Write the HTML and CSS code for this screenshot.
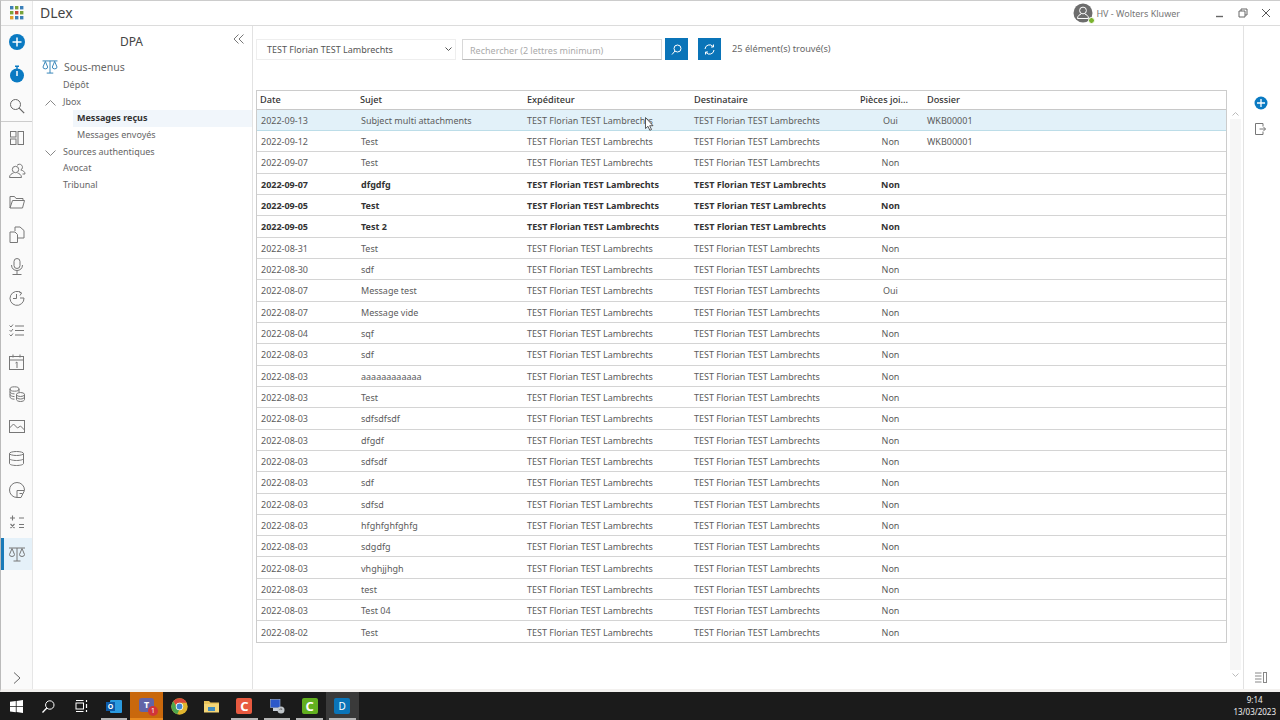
FILE: index.html
```html
<!DOCTYPE html>
<html lang="fr">
<head>
<meta charset="utf-8">
<title>DLex</title>
<link rel="stylesheet" href="styles.css">
</head>
<body>
<div class="window">
  <header class="topbar">
    <div class="brand-cell">
      <svg width="14" height="14" viewBox="0 0 14 14"><rect x="0" y="0" width="3.4" height="3.4" fill="#3b7fb8"/><rect x="5" y="0" width="3.4" height="3.4" fill="#7aa33a"/><rect x="10" y="0" width="3.4" height="3.4" fill="#3b7fb8"/><rect x="0" y="5" width="3.4" height="3.4" fill="#7aa33a"/><rect x="5" y="5" width="3.4" height="3.4" fill="#c8453b"/><rect x="10" y="5" width="3.4" height="3.4" fill="#7aa33a"/><rect x="0" y="10" width="3.4" height="3.4" fill="#e0a030"/><rect x="5" y="10" width="3.4" height="3.4" fill="#3b7fb8"/><rect x="10" y="10" width="3.4" height="3.4" fill="#3b7fb8"/></svg>
    </div>
    <div class="app-name">DLex</div>
    <div class="user">
      <span class="avatar">
        <svg width="20" height="20" viewBox="0 0 20 20"><circle cx="10" cy="10" r="9.5" fill="#6d6d6d"/><circle cx="10" cy="7.500" r="3.400" fill="none" stroke="#fff" stroke-width="1"/><path d="M4.500 15.500c0-3 2.400-4 3.600-4.400M15.500 15.500c0-3-2.400-4-3.600-4.400M4.500 15.500h11" fill="none" stroke="#fff" stroke-width="1"/></svg>
        <span class="status"></span>
      </span>
      <span class="user-name">HV - Wolters Kluwer</span>
    </div>
    <div class="win-controls">
      <svg width="10" height="10" viewBox="0 0 10 10"><path d="M1 8.500h7" stroke="#666" stroke-width="1.400"/></svg>
      <svg width="10" height="10" viewBox="0 0 10 10"><path d="M1 3h6v6H1zM3 3V1h6v6H7" fill="none" stroke="#666"/></svg>
      <svg width="10" height="10" viewBox="0 0 10 10"><path d="M1 1l8 8M9 1l-8 8" stroke="#555"/></svg>
    </div>
  </header>
  <div class="body">
    <nav class="rail">
      <div class="rail-item"><svg width="16" height="16" viewBox="0 0 16 16"><circle cx="8" cy="8" r="8" fill="#0a7ac2"/><path d="M8 3.500v9M3.500 8h9" stroke="#fff" stroke-width="1.500"/></svg></div>
      <div class="rail-item"><svg width="16" height="18" viewBox="0 0 16 18"><circle cx="8" cy="10.500" r="7" fill="#0a7ac2"/><rect x="6" y="0.500" width="4" height="1.500" fill="#0a7ac2"/><rect x="7.300" y="2" width="1.400" height="2" fill="#0a7ac2"/><path d="M8 6v5" stroke="#fff" stroke-width="1.500"/></svg></div>
      <div class="rail-item rail-search"><svg width="16" height="16" viewBox="0 0 16 16"><circle cx="6.500" cy="6.500" r="5" fill="none" stroke="#666"/><path d="M10.200 10.200l5 5" stroke="#666" stroke-width="1.200"/></svg></div>
      <div class="rail-item"><svg width="16" height="16" viewBox="0 0 16 16" fill="none" stroke="#777"><rect x="1.500" y="1.500" width="5.500" height="5.500"/><rect x="1.500" y="9" width="5.500" height="5.500"/><rect x="9" y="1.500" width="5.500" height="13"/></svg></div>
      <div class="rail-item"><svg width="18" height="18" viewBox="0 0 18 18" fill="none" stroke="#777"><circle cx="7.500" cy="8.500" r="3.200"/><path d="M1.500 16.500c0-3 2.500-4 4-4.500M13.500 16.500c0-3-2.500-4-4-4.500M1.500 16.500h12"/><path d="M9 4.500a3 3 0 1 1 3.800 4.400c2 .6 4.200 1.600 4.200 4.100h-2.500"/></svg></div>
      <div class="rail-item"><svg width="16" height="14" viewBox="0 0 16 14" fill="none" stroke="#777"><path d="M1 13V1.500h4.500l1.500 2h7v2"/><path d="M1 13l2.500-7.500H15.500L13.500 13z"/></svg></div>
      <div class="rail-item"><svg width="16" height="17" viewBox="0 0 16 17" fill="none" stroke="#777"><path d="M1 6h5l2.500 2.500V16.500H1z"/><path d="M6 5V1h5l4 3.500V12H9"/></svg></div>
      <div class="rail-item"><svg width="14" height="17" viewBox="0 0 14 17" fill="none" stroke="#777"><rect x="4" y="0.500" width="6" height="10" rx="3"/><path d="M1.500 7c0 3.500 2.500 5.500 5.500 5.500s5.500-2 5.500-5.500M7 12.500v3.500M2.500 16.500h9"/></svg></div>
      <div class="rail-item"><svg width="16" height="16" viewBox="0 0 16 16" fill="none" stroke="#777"><path d="M12.500 3A7 7 0 1 0 15 8"/><path d="M7.500 4v4.500H4M10 1.500l2.500 1.500L11 5.500M11 8h4"/></svg></div>
      <div class="rail-item"><svg width="15" height="13" viewBox="0 0 15 13" fill="none" stroke="#777"><path d="M0.500 1.500l1.500 1.500 2-2.500M0.500 6l1.500 1.500 2-2.500M0.500 10.500l1.500 1.500 2-2.500M6 2h9M6 6.500h9M6 11h9"/></svg></div>
      <div class="rail-item"><svg width="15" height="16" viewBox="0 0 15 16" fill="none" stroke="#777"><rect x="0.500" y="2.500" width="14" height="13"/><path d="M0.500 6h14M4 0.500v3M11 0.500v3M6.500 9l1.500-1v6"/></svg></div>
      <div class="rail-item"><svg width="16" height="16" viewBox="0 0 16 16" fill="none" stroke="#777"><ellipse cx="5.500" cy="3" rx="4.500" ry="2.200"/><path d="M1 3v8c0 1.200 2 2.200 4.500 2.200M10 3v3M1 5.700c0 1.200 2 2.200 4.500 2.200M1 8.400c0 1.200 2 2.200 4.500 2.200"/><ellipse cx="11.500" cy="8.500" rx="4" ry="2"/><path d="M7.500 8.500v5c0 1.100 1.800 2 4 2s4-.9 4-2v-5M7.500 11c0 1.100 1.800 2 4 2s4-.9 4-2"/></svg></div>
      <div class="rail-item"><svg width="16" height="13" viewBox="0 0 16 13" fill="none" stroke="#777"><rect x="0.500" y="0.500" width="15" height="12"/><path d="M0.500 8l4-4 4 4 3-2 4 4"/></svg></div>
      <div class="rail-item"><svg width="15" height="15" viewBox="0 0 15 15" fill="none" stroke="#777"><ellipse cx="7.500" cy="2.500" rx="7" ry="2"/><path d="M0.500 2.500v10c0 1.100 3.100 2 7 2s7-.9 7-2v-10M0.500 7.500c0 1.100 3.100 2 7 2s7-.9 7-2"/></svg></div>
      <div class="rail-item"><svg width="16" height="16" viewBox="0 0 16 16" fill="none" stroke="#777"><path d="M15.500 8A7.500 7.500 0 1 0 8 15.500"/><path d="M8 15.500V8.500h7.500L12 15.500z"/><path d="M10.500 11.500h3"/></svg></div>
      <div class="rail-item"><svg width="16" height="14" viewBox="0 0 16 14" stroke="#777" stroke-width="1.100"><path d="M3.500 0.500v5M1 3h5M10 3h5M1.500 9l4 4M5.500 9l-4 4M10 9.500h5M10 12.500h5"/></svg></div>
      <div class="rail-item is-active"><svg class="scale-icon" width="16" height="15" viewBox="0 0 16 15" fill="none" stroke="#777"><path d="M0 1h16M8 1v13M4.500 14h7M3 1.500L0.500 7.500a2.500 2 0 0 0 5 0zM13 1.500l-2.500 6a2.500 2 0 0 0 5 0z"/></svg></div>
      <div class="rail-spacer"></div>
      <div class="rail-expand"><svg width="8" height="12" viewBox="0 0 8 12"><path d="M1 0.500l6 5.500-6 5.500" fill="none" stroke="#666"/></svg></div>
    </nav>
    <aside class="sidebar">
      <div class="side-title">
        <span>DPA</span>
        <svg class="collapse" width="11" height="10" viewBox="0 0 11 10"><path d="M5.500 0.500L1 5l4.500 4.500M10.500 0.500L6 5l4.500 4.500" fill="none" stroke="#777"/></svg>
      </div>
      <div class="side-head">
        <svg width="16" height="14" viewBox="0 0 16 15" fill="none" stroke="#2b7fb5"><path d="M0 1h16M8 1v13M4.500 14h7M3 1.500L0.500 7.500a2.500 2 0 0 0 5 0zM13 1.500l-2.500 6a2.500 2 0 0 0 5 0z"/></svg>
        <span>Sous-menus</span>
      </div>
      <ul class="side-menu">
        <li class="lvl1">Dépôt</li>
        <li class="lvl1"><svg class="caret" width="11" height="6" viewBox="0 0 11 6"><path d="M0.500 5.500L5.500 0.500l5 5" fill="none" stroke="#888"/></svg>Jbox</li>
        <li class="lvl2 selected">Messages reçus</li>
        <li class="lvl2">Messages envoyés</li>
        <li class="lvl1"><svg class="caret" width="11" height="6" viewBox="0 0 11 6"><path d="M0.500 0.500l5 5 5-5" fill="none" stroke="#888"/></svg>Sources authentiques</li>
        <li class="lvl1">Avocat</li>
        <li class="lvl1">Tribunal</li>
      </ul>
    </aside>
    <main class="main">
      <div class="toolbar">
        <div class="select"><span>TEST Florian TEST Lambrechts</span><svg width="7" height="5" viewBox="0 0 7 5"><path d="M0.500 0.500l3 3 3-3" fill="none" stroke="#555"/></svg></div>
        <div class="search">Rechercher (2 lettres minimum)</div>
        <div class="btn"><svg width="11" height="11" viewBox="0 0 11 11" fill="none" stroke="#fff"><circle cx="6.500" cy="4.500" r="3.500"/><path d="M4 7l-3 3.500"/></svg></div>
        <div class="btn btn-refresh"><svg width="11" height="11" viewBox="0 0 11 11" fill="none" stroke="#fff"><path d="M1 5a4.500 4.500 0 0 1 8-2.500M10 6a4.500 4.500 0 0 1-8 2.500M9.500 0.500v2.500H7M1.500 10.500V8H4"/></svg></div>
        <div class="count">25 élément(s) trouvé(s)</div>
      </div>
      <div class="table-wrap">
        <div class="table">
          <div class="row head"><span>Date</span><span>Sujet</span><span>Expéditeur</span><span>Destinataire</span><span>Pièces joi...</span><span>Dossier</span></div>
          <div class="row hover"><span>2022-09-13</span><span>Subject multi attachments</span><span>TEST Florian TEST Lambrechts</span><span>TEST Florian TEST Lambrechts</span><span class="c">Oui</span><span>WKB00001</span></div>
          <div class="row"><span>2022-09-12</span><span>Test</span><span>TEST Florian TEST Lambrechts</span><span>TEST Florian TEST Lambrechts</span><span class="c">Non</span><span>WKB00001</span></div>
          <div class="row"><span>2022-09-07</span><span>Test</span><span>TEST Florian TEST Lambrechts</span><span>TEST Florian TEST Lambrechts</span><span class="c">Non</span><span></span></div>
          <div class="row unread"><span>2022-09-07</span><span>dfgdfg</span><span>TEST Florian TEST Lambrechts</span><span>TEST Florian TEST Lambrechts</span><span class="c">Non</span><span></span></div>
          <div class="row unread"><span>2022-09-05</span><span>Test</span><span>TEST Florian TEST Lambrechts</span><span>TEST Florian TEST Lambrechts</span><span class="c">Non</span><span></span></div>
          <div class="row unread"><span>2022-09-05</span><span>Test 2</span><span>TEST Florian TEST Lambrechts</span><span>TEST Florian TEST Lambrechts</span><span class="c">Non</span><span></span></div>
          <div class="row"><span>2022-08-31</span><span>Test</span><span>TEST Florian TEST Lambrechts</span><span>TEST Florian TEST Lambrechts</span><span class="c">Non</span><span></span></div>
          <div class="row"><span>2022-08-30</span><span>sdf</span><span>TEST Florian TEST Lambrechts</span><span>TEST Florian TEST Lambrechts</span><span class="c">Non</span><span></span></div>
          <div class="row"><span>2022-08-07</span><span>Message test</span><span>TEST Florian TEST Lambrechts</span><span>TEST Florian TEST Lambrechts</span><span class="c">Oui</span><span></span></div>
          <div class="row"><span>2022-08-07</span><span>Message vide</span><span>TEST Florian TEST Lambrechts</span><span>TEST Florian TEST Lambrechts</span><span class="c">Non</span><span></span></div>
          <div class="row"><span>2022-08-04</span><span>sqf</span><span>TEST Florian TEST Lambrechts</span><span>TEST Florian TEST Lambrechts</span><span class="c">Non</span><span></span></div>
          <div class="row"><span>2022-08-03</span><span>sdf</span><span>TEST Florian TEST Lambrechts</span><span>TEST Florian TEST Lambrechts</span><span class="c">Non</span><span></span></div>
          <div class="row"><span>2022-08-03</span><span>aaaaaaaaaaaa</span><span>TEST Florian TEST Lambrechts</span><span>TEST Florian TEST Lambrechts</span><span class="c">Non</span><span></span></div>
          <div class="row"><span>2022-08-03</span><span>Test</span><span>TEST Florian TEST Lambrechts</span><span>TEST Florian TEST Lambrechts</span><span class="c">Non</span><span></span></div>
          <div class="row"><span>2022-08-03</span><span>sdfsdfsdf</span><span>TEST Florian TEST Lambrechts</span><span>TEST Florian TEST Lambrechts</span><span class="c">Non</span><span></span></div>
          <div class="row"><span>2022-08-03</span><span>dfgdf</span><span>TEST Florian TEST Lambrechts</span><span>TEST Florian TEST Lambrechts</span><span class="c">Non</span><span></span></div>
          <div class="row"><span>2022-08-03</span><span>sdfsdf</span><span>TEST Florian TEST Lambrechts</span><span>TEST Florian TEST Lambrechts</span><span class="c">Non</span><span></span></div>
          <div class="row"><span>2022-08-03</span><span>sdf</span><span>TEST Florian TEST Lambrechts</span><span>TEST Florian TEST Lambrechts</span><span class="c">Non</span><span></span></div>
          <div class="row"><span>2022-08-03</span><span>sdfsd</span><span>TEST Florian TEST Lambrechts</span><span>TEST Florian TEST Lambrechts</span><span class="c">Non</span><span></span></div>
          <div class="row"><span>2022-08-03</span><span>hfghfghfghfg</span><span>TEST Florian TEST Lambrechts</span><span>TEST Florian TEST Lambrechts</span><span class="c">Non</span><span></span></div>
          <div class="row"><span>2022-08-03</span><span>sdgdfg</span><span>TEST Florian TEST Lambrechts</span><span>TEST Florian TEST Lambrechts</span><span class="c">Non</span><span></span></div>
          <div class="row"><span>2022-08-03</span><span>vhghjjhgh</span><span>TEST Florian TEST Lambrechts</span><span>TEST Florian TEST Lambrechts</span><span class="c">Non</span><span></span></div>
          <div class="row"><span>2022-08-03</span><span>test</span><span>TEST Florian TEST Lambrechts</span><span>TEST Florian TEST Lambrechts</span><span class="c">Non</span><span></span></div>
          <div class="row"><span>2022-08-03</span><span>Test 04</span><span>TEST Florian TEST Lambrechts</span><span>TEST Florian TEST Lambrechts</span><span class="c">Non</span><span></span></div>
          <div class="row"><span>2022-08-02</span><span>Test</span><span>TEST Florian TEST Lambrechts</span><span>TEST Florian TEST Lambrechts</span><span class="c">Non</span><span></span></div>
          <svg class="cursor" width="9" height="14" viewBox="0 0 9 14"><path d="M0.500 0.500v11l2.500-2.200 1.800 4 1.700-.8-1.800-3.800h3.300z" fill="#fff" stroke="#333" stroke-width="0.800"/></svg>
        </div>
        <div class="scrollbar">
          <svg width="7" height="4" viewBox="0 0 7 4"><path d="M0.500 3.500l3-3 3 3" fill="none" stroke="#bbb"/></svg>
          <div class="track"></div>
          <svg width="7" height="4" viewBox="0 0 7 4"><path d="M0.500 0.500l3 3 3-3" fill="none" stroke="#bbb"/></svg>
        </div>
      </div>
    </main>
    <aside class="right-rail">
      <svg class="rr-add" width="14" height="14" viewBox="0 0 14 14"><circle cx="7" cy="7" r="6.500" fill="#0a7ac2"/><path d="M7 3v8M3 7h8" stroke="#fff" stroke-width="1.300"/></svg>
      <svg class="rr-exit" width="11" height="12" viewBox="0 0 11 12" fill="none" stroke="#777"><path d="M8 3.500V0.500H0.500v11H8V8.500M4.500 6h6M8.500 4l2 2-2 2"/></svg>
      <div class="rail-spacer"></div>
      <svg class="rr-list" width="12" height="11" viewBox="0 0 12 11" fill="none" stroke="#888"><path d="M0 1h6.500M0 4h6.500M0 7h6.500M0 10h6.500"/><rect x="8.500" y="0.500" width="3" height="10"/></svg>
    </aside>
  </div>
</div>
<footer class="taskbar">
  <div class="task"><svg width="13" height="13" viewBox="0 0 13 13" fill="#fff"><path d="M0 1.800L5.800 1v5.200H0zM6.600 .9L13 0v6.200H6.600zM0 7h5.800v5.200L0 11.400zM6.600 7H13v6l-6.400-.9z"/></svg></div>
  <div class="task"><svg width="13" height="13" viewBox="0 0 13 13" fill="none" stroke="#fff"><circle cx="7.800" cy="5" r="4.200"/><path d="M4.800 8l-4.300 4.500" stroke-width="1.300"/></svg></div>
  <div class="task"><svg width="13" height="12" viewBox="0 0 13 12" fill="none" stroke="#fff"><rect x="1" y="3" width="7.500" height="6"/><path d="M1 0.500h7.500M1 11.500h7.500M11.500 0v2M11.500 4v4M11.500 10v2" stroke-width="1.200"/></svg></div>
  <div class="task open"><span class="outlook-wrap"><span class="outlook-env"></span><span class="outlook-o">O</span></span></div>
  <div class="task teams"><span class="teams-ic">T</span><span class="badge">1</span></div>
  <div class="task"><svg width="17" height="17" viewBox="0 0 17 17"><circle cx="8.500" cy="8.500" r="8.200" fill="#e0b52e"/><path d="M8.500 .3a8.200 8.200 0 0 1 7.300 4.500H8.500a3.700 3.700 0 0 0-3.500 2.500L2.300 3.200A8.200 8.200 0 0 1 8.500 .3z" fill="#d9483b"/><path d="M2.300 3.200L5.800 9.800l3.400 0-3 6.500A8.200 8.200 0 0 1 2.300 3.200z" fill="#4da54e"/><circle cx="8.500" cy="8.500" r="3.700" fill="#fff"/><circle cx="8.500" cy="8.500" r="2.900" fill="#4285d0"/></svg></div>
  <div class="task"><svg width="15" height="13" viewBox="0 0 15 13"><path d="M0 1h5l1.500 1.500H15V12H0z" fill="#e9c35a"/><rect x="0" y="4" width="15" height="8.500" fill="#f3d577"/><rect x="4" y="7" width="7" height="4" fill="#3f8cc0"/></svg></div>
  <div class="task open"><span class="app camtasia-r">C</span></div>
  <div class="task open"><svg width="15" height="15" viewBox="0 0 15 15"><rect x="0.500" y="0.500" width="9.500" height="8" fill="#2c58c9" stroke="#9db4e0" stroke-width="0.600"/><rect x="3" y="9" width="8" height="3" fill="#c6cdd8"/><circle cx="11" cy="11" r="3.500" fill="#bfc4c8"/><path d="M9.500 11l1.500-1.500 1 1.500" stroke="#444" fill="none" stroke-width="0.700"/></svg></div>
  <div class="task open"><span class="app camtasia-g">C</span></div>
  <div class="task active-app open"><span class="app dlex">D</span></div>
  <div class="task-spacer"></div>
  <div class="clock"><span>9:14</span><span>13/03/2023</span></div>
</footer>
</body>
</html>
```
FILE: styles.css
```css
* { box-sizing: border-box; }
html, body { margin: 0; padding: 0; width: 1280px; height: 720px; overflow: hidden; }
body { font-family: "Noto Sans", "Open Sans", sans-serif; font-size: 9px; color: #5c5c5c; background: #fff; display: flex; flex-direction: column; }
svg { display: block; flex: none; }

.window { height: 692px; display: flex; flex-direction: column; border-left: 1px solid #bbb; border-top: 1px solid #ccc; border-bottom: 3px solid #f3f1ef; }
.topbar { height: 25px; display: flex; align-items: center; border-bottom: 1px solid #dcdcdc; flex: none; }
.brand-cell { width: 32px; height: 100%; display: flex; align-items: center; justify-content: center; background: #fafafa; border-right: 1px solid #e6e6e6; }
.app-name { margin-left: 7px; padding-bottom: 2px; font-size: 14px; color: #444; flex: 1; }
.user { display: flex; align-items: center; gap: 3px; margin-right: 35px; }
.avatar { position: relative; display: block; width: 20px; height: 20px; }
.status { position: absolute; right: -2px; bottom: -1px; width: 7px; height: 7px; border-radius: 50%; background: #7ab32e; border: 1px solid #fff; }
.user-name { font-size: 9px; color: #777; padding-top: 1px; }
.win-controls { display: flex; gap: 13px; margin-right: 9px; align-items: center; }

.body { flex: 1; display: flex; min-height: 0; }
.rail { width: 32px; background: #fafafa; border-right: 1px solid #e6e6e6; display: flex; flex-direction: column; flex: none; }
.rail-item { height: 32px; display: flex; align-items: center; justify-content: center; flex: none; }
.rail-search { border-bottom: 1px solid #ccc; }
.is-active { background: #e5f1f9; border-left: 3px solid #1a7ab8; padding-right: 3px; }
.rail-spacer { flex: 1; }
.rail-expand { height: 23px; display: flex; align-items: center; justify-content: center; flex: none; }

.sidebar { width: 220px; flex: none; border-right: 1px solid #e2e2e2; padding-top: 7px; }
.side-title { position: relative; text-align: center; font-size: 12px; color: #444; height: 18px; line-height: 18px; padding-right: 22px; }
.collapse { position: absolute; right: 8px; top: 1px; }
.side-head { display: flex; align-items: center; margin: 8px 0 0 9px; gap: 6px; font-size: 10.500px; color: #666; height: 16px; }
.side-menu { list-style: none; margin: 2px 0 0; padding: 0; }
.side-menu li { position: relative; height: 16.670px; line-height: 16.670px; font-size: 9px; color: #666; white-space: nowrap; }
.lvl1 { padding-left: 30px; }
.lvl2 { margin-left: 40px; padding-left: 4px; }
.selected { background: #f1f6fb; color: #333 !important; font-weight: 700; }
.caret { position: absolute; left: 12px; top: 6px; }

.main { flex: 1; min-width: 0; padding: 12px 3px 0; position: relative; }
.toolbar { display: flex; align-items: center; height: 22px; }
.select { width: 200px; height: 21px; border: 1px solid #eee; display: flex; align-items: center; justify-content: space-between; padding: 0 3px 0 10px; color: #555; }
.search { width: 200px; height: 21px; margin-left: 6px; border: 1px solid #d8d8d8; border-bottom-color: #bbb; padding: 1px 0 0 7px; line-height: 19px; color: #aaa; }
.btn { width: 23px; height: 22px; margin-left: 3px; background: #0a74b8; display: flex; align-items: center; justify-content: center; }
.btn-refresh { margin-left: 10px; }
.count { margin-left: 11px; font-size: 9.200px; color: #666; position: relative; top: -1px; }

.table-wrap { display: flex; margin-top: 30px; height: 587px; }
.table { position: relative; width: 971px; height: 553px; border: 1px solid #ccc; flex: none; align-self: flex-start; }
.row { display: grid; grid-template-columns: 100px 166px 167px 166px 67px 1fr; height: 21.340px; align-items: center; border-bottom: 1px solid #d4d4d4; }
.row:last-of-type { border-bottom: 0; }
.row span { padding: 1px 0 0 4px; white-space: nowrap; overflow: hidden; }
.row.head { height: 18.600px; font-size: 9.200px; font-weight: 500; color: #333; border-bottom-color: #c8c8c8; }
.head span { padding: 0 0 0 3px; }
.row.head span:nth-child(n+3) { padding-left: 4px; }
.row.head span:nth-child(n+2) { padding-top: 0; }
.row .c { text-align: center; padding-left: 2px; }
.hover { background: #e2f1f9; border-bottom-color: #bcdde8; }
.unread { color: #333; font-weight: 700; }
.cursor { position: absolute; left: 388px; top: 26px; }

.scrollbar { width: 11px; margin-left: 3px; margin-top: 22px; display: flex; flex-direction: column; align-items: center; gap: 3px; }
.track { width: 11px; flex: 1; background: #f6f6f6; }

.right-rail { width: 37px; flex: none; border-left: 1px solid #e2e2e2; display: flex; flex-direction: column; align-items: center; padding: 70px 3px 6px 0; }
.rr-exit { margin-top: 13px; }

.taskbar { height: 28px; flex: none; background: #1b1b1b; display: flex; align-items: stretch; color: #fff; }
.task { width: 32.600px; position: relative; display: flex; align-items: center; justify-content: center; flex: none; }
.open::after { content: ""; position: absolute; left: 3px; right: 3px; bottom: 0; height: 2px; background: #b5b5b5; }
.teams { background: #c9680c; border-bottom: 2px solid #e88a1e; }
.active-app { background: #3a3a3a; }
.app { width: 16px; height: 16px; display: flex; align-items: center; justify-content: center; font-size: 10px; font-weight: 700; color: #fff; border-radius: 2px; }
.outlook-wrap { position: relative; display: block; width: 16px; height: 15px; }
.outlook-env { position: absolute; left: 4px; top: 1px; width: 12px; height: 13px; background: #2a9be0; border-radius: 1px; }
.outlook-o { position: absolute; left: 0; top: 3px; width: 9px; height: 9px; background: #0d5aa8; color: #fff; font-size: 7px; line-height: 9px; font-weight: 700; text-align: center; }
.teams-ic { display: block; width: 15px; height: 14px; background: #6264a7; color: #fff; border-radius: 3px; font-size: 9px; line-height: 14px; font-weight: 700; text-align: center; }
.badge { position: absolute; right: 5px; bottom: 2px; width: 10px; height: 10px; border-radius: 50%; background: #d13438; font-size: 7px; line-height: 10px; text-align: center; color: #fff; }
.camtasia-r { background: #e85a40; font-size: 13px; }
.camtasia-g { background: #62b01f; font-size: 13px; }
.dlex { background: #0a74b8; font-weight: 400; }
.task-spacer { flex: 1; }
.clock { display: flex; flex-direction: column; align-items: center; justify-content: center; margin-right: 4px; font-size: 8px; line-height: 12px; color: #eee; }
```
